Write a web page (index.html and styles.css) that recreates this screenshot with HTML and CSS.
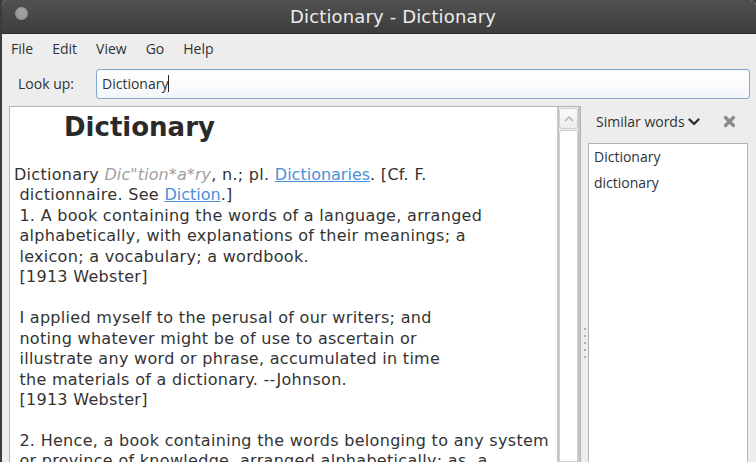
FILE: index.html
```html
<!DOCTYPE html>
<html>
<head>
<meta charset="utf-8">
<title>Dictionary - Dictionary</title>
<link rel="stylesheet" href="styles.css">
</head>
<body>
<div class="window">
  <header class="titlebar">
    <span class="wm-btn"></span>
    <span class="title">Dictionary - Dictionary</span>
  </header>
  <nav class="menubar">
    <span class="menu-item">File</span>
    <span class="menu-item">Edit</span>
    <span class="menu-item">View</span>
    <span class="menu-item">Go</span>
    <span class="menu-item">Help</span>
  </nav>
  <div class="lookup">
    <label class="lookup-label">Look up:</label>
    <div class="entry"><span class="entry-text">Dictionary</span><span class="caret"></span></div>
  </div>
  <div class="main">
    <div class="pane">
      <div class="textview">
        <h1 class="headword">Dictionary</h1>
<pre class="def">Dictionary <i class="pron">Dic"tion*a*ry</i>, n.; pl. <a class="link">Dictionaries</a>. [Cf. F.
 dictionnaire. See <a class="link">Diction</a>.]
 1. A book containing the words of a language, arranged
 alphabetically, with explanations of their meanings; a
 lexicon; a vocabulary; a wordbook.
 [1913 Webster]

 I applied myself to the perusal of our writers; and
 noting whatever might be of use to ascertain or
 illustrate any word or phrase, accumulated in time
 the materials of a dictionary. --Johnson.
 [1913 Webster]

 2. Hence, a book containing the words belonging to any system
 or province of knowledge, arranged alphabetically; as, a</pre>
      </div>
      <div class="scrollbar">
        <div class="sb-btn">
          <svg width="10" height="6" viewBox="0 0 10 6"><path d="M1 5 L5 1 L9 5" fill="none" stroke="#b0b0b0" stroke-width="1.4"/></svg>
        </div>
        <div class="sb-slider"></div>
      </div>
    </div>
    <div class="handle">
      <span class="dot"></span><span class="dot"></span><span class="dot"></span><span class="dot"></span><span class="dot"></span>
    </div>
    <aside class="side">
      <div class="side-head">
        <span class="side-title">Similar words</span>
        <svg class="chevron" width="12" height="8" viewBox="0 0 12 8"><path d="M1.5 1.5 L6 6 L10.5 1.5" fill="none" stroke="#2e3436" stroke-width="2.4" stroke-linecap="round" stroke-linejoin="round"/></svg>
        <span class="spacer"></span>
        <svg class="close" width="13" height="13" viewBox="0 0 13 13"><path d="M2.5 2.5 L10.5 10.5 M10.5 2.5 L2.5 10.5" fill="none" stroke="#8a8a8a" stroke-width="3.2" stroke-linecap="round"/></svg>
      </div>
      <ul class="list">
        <li class="list-item">Dictionary</li>
        <li class="list-item">dictionary</li>
      </ul>
    </aside>
  </div>
</div>
</body>
</html>
```
FILE: styles.css
```css
html, body {
  margin: 0;
  padding: 0;
}
body {
  width: 756px;
  height: 462px;
  overflow: hidden;
  background: #3a3a3a;
  font-family: "Open Sans", "Noto Sans", sans-serif;
  font-size: 14px;
  color: #2e3436;
}
.window {
  height: 462px;
  display: flex;
  flex-direction: column;
  background: #ededed;
  border-left: 2px solid #3c3c3c;
  border-radius: 6px 6px 0 0;
  overflow: hidden;
}
.titlebar {
  height: 33px;
  flex: none;
  display: flex;
  align-items: center;
  background: linear-gradient(#505050, #3d3d3d);
  border-bottom: 1px solid #2c2c2c;
  position: relative;
}
.wm-btn {
  position: absolute;
  left: 13px;
  top: 7px;
  width: 13px;
  height: 13px;
  border-radius: 50%;
  background: radial-gradient(circle at 50% 40%, #a6a6a6, #8c8c8c);
}
.title {
  flex: 1;
  text-align: center;
  padding-left: 28px;
  font-family: "DejaVu Sans", sans-serif;
  font-size: 18px;
  letter-spacing: 0.15px;
  color: #ececec;
  line-height: 33px;
}
.menubar {
  height: 28px;
  flex: none;
  display: flex;
  align-items: center;
}
.menu-item {
  padding: 0 9.5px;
}
.menu-item:first-child {
  padding-left: 9px;
}
.lookup {
  height: 43px;
  flex: none;
  display: flex;
  align-items: center;
  padding: 0 6px 0 16px;
}
.lookup-label {
  width: 78px;
}
.entry {
  flex: 1;
  height: 28px;
  border: 1px solid #86a9d0;
  border-radius: 3px;
  background: linear-gradient(#ffffff, #f3f6f9);
  display: flex;
  align-items: center;
  padding-left: 5px;
  box-shadow: inset 0 1px 1px rgba(0,0,0,0.05);
}
.caret {
  width: 1px;
  height: 17px;
  background: #222;
}
.main {
  flex: 1;
  display: flex;
  min-height: 0;
  padding-top: 1px;
}
.pane {
  margin-left: 7px;
  width: 570px;
  display: flex;
  border: 1px solid #b4b4b4;
  border-bottom: none;
  background: #ffffff;
}
.textview {
  flex: 1;
  overflow: hidden;
  font-family: "DejaVu Sans", sans-serif;
  color: #2e3436;
}
.headword {
  margin: 5px 0 0 54px;
  font-size: 26px;
  font-weight: bold;
  line-height: 30px;
  color: #2a2a2a;
}
.def {
  margin: 23px 0 0 4px;
  font-family: "DejaVu Sans", sans-serif;
  font-size: 16px;
  line-height: 20.45px;
  letter-spacing: 0.3px;
  white-space: pre;
  color: #333333;
}
.pron {
  color: #a0a0a0;
  font-style: italic;
  letter-spacing: 0.1px;
}
.link {
  color: #4a90d9;
  text-decoration: underline;
  letter-spacing: 0;
}
.scrollbar {
  width: 19px;
  flex: none;
  display: flex;
  flex-direction: column;
  background: #ececec;
  border-left: 2px solid #c6c6c6;
  border-right: 2px solid #c6c6c6;
}
.sb-btn {
  height: 19px;
  margin-top: 1px;
  background: linear-gradient(#fbfbfb, #ececec);
  border: 1px solid #cfcfcf;
  border-radius: 3px;
  display: flex;
  align-items: center;
  justify-content: center;
}
.sb-slider {
  flex: 1;
  margin-top: 1px;
  background: #ffffff;
  border: 1px solid #cfcfcf;
  border-radius: 3px 3px 0 0;
}
.handle {
  width: 7px;
  flex: none;
  display: flex;
  flex-direction: column;
  align-items: center;
  gap: 5px;
  padding-top: 222px;
}
.dot {
  width: 2px;
  height: 2px;
  border-radius: 1px;
  background: #9a9a9a;
}
.side {
  flex: 1;
  display: flex;
  flex-direction: column;
  padding-right: 8px;
}
.side-head {
  height: 30px;
  flex: none;
  display: flex;
  align-items: center;
  padding: 0 12px 7px 8px;
}
.chevron {
  margin-left: 3px;
  margin-top: 1px;
}
.spacer {
  flex: 1;
}
.list {
  flex: 1;
  margin: 0;
  padding: 0 0 0 5px;
  list-style: none;
  background: #ffffff;
  border: 1px solid #b4b4b4;
  border-bottom: none;
}
.list-item {
  height: 26px;
  line-height: 26px;
}
```
